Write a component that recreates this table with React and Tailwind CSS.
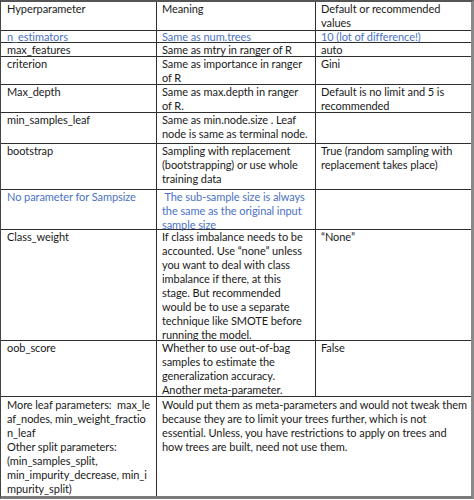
const rows = [
  {
    h: "h-[29px]",
    cells: [["Hyperparameter"], ["Meaning"], ["Default or recommended", "values"]],
  },
  {
    h: "h-[12px] leading-[11px]",
    blue: true,
    cells: [["n_estimators"], ["Same as num.trees"], ["10 (lot of difference!)"]],
  },
  {
    h: "h-[14px]",
    cells: [["max_features"], ["Same as mtry in ranger of R"], ["auto"]],
  },
  {
    h: "h-[28px]",
    cells: [["criterion"], ["Same as importance in ranger", "of R"], ["Gini"]],
  },
  {
    h: "h-[28px]",
    cells: [
      ["Max_depth"],
      ["Same as max.depth in ranger", "of R."],
      ["Default is no limit and 5 is", "recommended"],
    ],
  },
  {
    h: "h-[31px]",
    cells: [
      ["min_samples_leaf"],
      ["Same as min.node.size . Leaf", "node is same as terminal node."],
      [],
    ],
  },
  {
    h: "h-[46px]",
    cells: [
      ["bootstrap"],
      ["Sampling with replacement", "(bootstrapping) or use whole", "training data"],
      ["True (random sampling with", "replacement takes place)"],
    ],
  },
  {
    h: "h-[40px]",
    blue: true,
    cells: [
      ["No parameter for Sampsize"],
      ["\u00a0The sub-sample size is always", "the same as the original input", "sample size"],
      [],
    ],
  },
  {
    h: "h-[111px]",
    cells: [
      ["Class_weight"],
      [
        "If class imbalance needs to be",
        "accounted. Use \u201cnone\u201d unless",
        "you want to deal with class",
        "imbalance if there, at this",
        "stage. But recommended",
        "would be to use a separate",
        "technique like SMOTE before",
        "running the model.",
      ],
      ["\u201cNone\u201d"],
    ],
  },
  {
    h: "h-[56px]",
    cells: [
      ["oob_score"],
      [
        "Whether to use out-of-bag",
        "samples to estimate the",
        "generalization accuracy.",
        "Another meta-parameter.",
      ],
      ["False"],
    ],
  },
];

const lastLeft = [
  "More leaf parameters:\u00a0 max_le",
  "af_nodes, min_weight_fractio",
  "n_leaf",
  "Other split parameters:",
  "(min_samples_split,",
  "min_impurity_decrease, min_i",
  "mpurity_split)",
];

const lastRight = [
  "Would put them as meta-parameters and would not tweak them",
  "because they are to limit your trees further, which is not",
  "essential. Unless, you have restrictions to apply on trees and",
  "how trees are built, need not use them.",
];

function Lines({ lines }) {
  return lines.map((l, i) => (
    <div key={i} className="whitespace-pre">
      {l}
    </div>
  ));
}

export default function App() {
  return (
    <div
      className="w-[474px] h-[500px] bg-white overflow-hidden text-[11px] leading-[14px] tracking-[-0.07px] text-[#1a1a1a]"
      style={{ fontFamily: "Lato, 'Open Sans', sans-serif" }}
    >
      <div className="w-[474px] border-t-2 border-t-[#555] border-l border-l-[#444] border-r-[3px] border-r-[#8a8a8a] border-b-[3px] border-b-[#7a7a7a]">
        {rows.map((r, i) => (
          <div
            key={i}
            className={`grid grid-cols-[156px_159px_155px] border-b border-[#2e2e2e] ${r.h} ${
              r.blue ? "text-[#4a72c4]" : ""
            }`}
          >
            <div className="border-r border-[#2e2e2e] pl-[6px]">
              <Lines lines={r.cells[0]} />
            </div>
            <div className="border-r border-[#2e2e2e] pl-[5px]">
              <Lines lines={r.cells[1]} />
            </div>
            <div className="pl-[5px]">
              <Lines lines={r.cells[2]} />
            </div>
          </div>
        ))}
        <div className="grid grid-cols-[156px_314px] h-[99px]">
          <div className="border-r border-[#2e2e2e] pl-[6px] pt-[1px]">
            <Lines lines={lastLeft} />
          </div>
          <div className="pl-[5px] pt-[1px]">
            <Lines lines={lastRight} />
          </div>
        </div>
      </div>
    </div>
  );
}
